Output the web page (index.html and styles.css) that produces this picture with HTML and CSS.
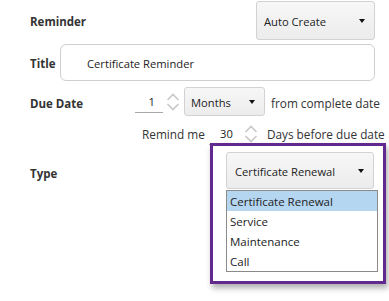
FILE: index.html
```html
<!DOCTYPE html>
<html>
<head>
<meta charset="utf-8">
<link rel="stylesheet" href="styles.css">
</head>
<body>
<div class="form">
  <div class="row row-reminder">
    <div class="label">Reminder</div>
    <div class="select select-auto"><span>Auto Create</span><span class="arrow"></span></div>
  </div>
  <div class="row row-title">
    <div class="label label-title">Title</div>
    <div class="textbox">Certificate Reminder</div>
  </div>
  <div class="row row-due">
    <div class="label label-due">Due Date</div>
    <div class="spin spin-due">
      <span class="num">1</span>
      <svg class="chev" width="14" height="20" viewBox="0 0 14 20"><path d="M1.5 8 L7 2.5 L12.5 8" fill="none" stroke="#c9c9c9" stroke-width="1.7"/><path d="M1.5 12 L7 17.5 L12.5 12" fill="none" stroke="#c9c9c9" stroke-width="1.7"/></svg>
    </div>
    <div class="select select-months"><span>Months</span><span class="arrow"></span></div>
    <div class="plain">from complete date</div>
  </div>
  <div class="row row-remind">
    <div class="plain">Remind me</div>
    <div class="spin spin-remind">
      <span class="num">30</span>
      <svg class="chev" width="14" height="20" viewBox="0 0 14 20"><path d="M1.5 8 L7 2.5 L12.5 8" fill="none" stroke="#c9c9c9" stroke-width="1.7"/><path d="M1.5 12 L7 17.5 L12.5 12" fill="none" stroke="#c9c9c9" stroke-width="1.7"/></svg>
    </div>
    <div class="plain">Days before due date</div>
  </div>
  <div class="row row-type">
    <div class="label label-type">Type</div>
    <div class="frame">
      <div class="select select-type"><span>Certificate Renewal</span><span class="arrow"></span></div>
      <ul class="list">
        <li class="selected">Certificate Renewal</li>
        <li>Service</li>
        <li>Maintenance</li>
        <li>Call</li>
      </ul>
    </div>
  </div>
</div>
</body>
</html>
```
FILE: styles.css
```css
* { box-sizing: border-box; }
html, body { margin: 0; padding: 0; background: #fff; }
body {
  width: 389px;
  height: 301px;
  overflow: hidden;
  font-family: "Open Sans", "Noto Sans", "Liberation Sans", sans-serif;
  font-size: 11.2px;
  color: #222;
  white-space: nowrap;
}
.form { padding: 1px 14px 0 30px; }
.row { display: flex; align-items: center; }
.row > * { flex-shrink: 0; }
.label { font-weight: bold; color: #333; font-size: 11.5px; padding-top: 2px; }
.select span:first-child, .textbox { padding-top: 1px; }

.row-reminder { height: 39px; justify-content: space-between; }
.select {
  display: flex;
  align-items: center;
  justify-content: space-between;
  border: 1px solid #d2d2d2;
  border-radius: 3px;
  background: linear-gradient(#f7f7f7, #ececec);
  padding: 0 9px 0 7px;
}
.arrow {
  width: 0; height: 0;
  border-left: 3.5px solid transparent;
  border-right: 3.5px solid transparent;
  border-top: 4px solid #111;
}
.select-auto { width: 119px; height: 39px; }

.row-title { margin-top: 4px; height: 37px; }
.label-title { width: 30px; }
.row-title .textbox { flex: 1 1 auto; }
.textbox {
  height: 37px;
  border: 1px solid #cfcfcf;
  border-radius: 6px;
  display: flex;
  align-items: center;
  padding-left: 26px;
}

.row-due { margin-top: 6px; height: 29px; }
.label-due { width: 105px; padding-top: 4px; }
.spin { display: flex; align-items: center; }
.num {
  display: block;
  border-bottom: 1px solid #a8a8a8;
  text-align: right;
  padding: 0 8px 3px 0;
  line-height: 14px;
  margin-top: 5px;
}
.spin-due .num { width: 28px; }
.chev { margin-left: 3px; display: block; margin-top: 1px; }
.select-months { width: 81px; height: 29px; margin-left: 4px; padding-left: 6px; }
.plain { color: #333; font-size: 11.8px; padding-top: 2px; }
.row-due .plain { margin-left: 6px; padding-top: 3px; }

.row-remind { margin-top: 6px; height: 22px; padding-left: 112px; }
.spin-remind { margin-left: 4px; }
.spin-remind .num { width: 30px; padding-right: 6px; }
.spin-remind .chev { margin-left: 5px; }
.row-remind > .plain:last-child { margin-left: 9px; }

.row-type { margin-top: -1px; align-items: flex-start; }
.label-type { width: 180px; margin-top: 21px; }
.frame {
  width: 176px;
  height: 141px;
  border: 3px solid #62298e;
  background: #fff;
  padding: 6px 5px 0 13px;
  box-shadow: 2px 4px 6px rgba(0,0,0,0.32);
}
.select-type { width: 148px; height: 37px; padding-left: 8px; }
.list {
  list-style: none;
  margin: 1px 0 0 0;
  padding: 0;
  width: 152px;
  border: 1px solid #8a8a8a;
  font-size: 11.5px;
}
.list li { height: 20px; line-height: 21px; padding-left: 3px; }
.list li.selected { background: #b5d6f1; }
```
